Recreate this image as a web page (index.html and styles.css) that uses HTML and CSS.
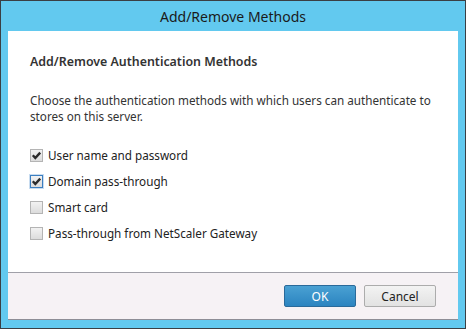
FILE: index.html
```html
<!DOCTYPE html>
<html>
<head>
<meta charset="utf-8">
<link rel="stylesheet" href="styles.css">
</head>
<body>
<div class="window">
  <div class="titlebar">Add/Remove Methods</div>
  <div class="content">
    <div class="main">
      <h1 class="heading">Add/Remove Authentication Methods</h1>
      <p class="desc">Choose the authentication methods with which users can authenticate to stores on this server.</p>
      <ul class="options">
        <li class="option"><span class="box checked"><svg viewBox="0 0 13 13" width="13" height="13"><path d="M2.8 6.3 L5.3 9 L10.2 3.6" fill="none" stroke="#2b2b2b" stroke-width="2.4"/></svg></span>User name and password</li>
        <li class="option"><span class="box checked focus"><svg viewBox="0 0 13 13" width="13" height="13"><path d="M2.8 6.3 L5.3 9 L10.2 3.6" fill="none" stroke="#2b2b2b" stroke-width="2.4"/></svg></span>Domain pass-through</li>
        <li class="option"><span class="box"></span>Smart card</li>
        <li class="option"><span class="box"></span>Pass-through from NetScaler Gateway</li>
      </ul>
    </div>
    <div class="footer">
      <button class="btn primary">OK</button>
      <button class="btn">Cancel</button>
    </div>
  </div>
</div>
</body>
</html>
```
FILE: styles.css
```css
* { box-sizing: border-box; }
html, body { margin: 0; padding: 0; }
body {
  width: 466px;
  height: 329px;
  font-family: "Noto Sans", "Open Sans", sans-serif;
  overflow: hidden;
}
.window {
  width: 466px;
  height: 329px;
  background: #62c9ef;
  border: 1px solid #3a3f44;
  padding: 0 7px 8px 7px;
  display: flex;
  flex-direction: column;
}
.titlebar {
  height: 30px;
  display: flex;
  align-items: center;
  justify-content: center;
  font-size: 14px;
  color: #1a1a1a;
  padding-top: 1px;
}
.content {
  flex: 1;
  background: #fff;
  display: flex;
  flex-direction: column;
  border-bottom: 1px solid #8e8e96;
}
.main {
  flex: 1;
  padding: 22px 22px 0 22px;
}
.heading {
  margin: 0;
  font-size: 12.4px;
  font-weight: 600;
  color: #333;
  line-height: 18px;
}
.desc {
  margin: 21px 0 0 0;
  font-size: 11.7px;
  line-height: 16px;
  color: #333;
}
.options {
  list-style: none;
  margin: 23px 0 0 0;
  padding: 0;
  display: flex;
  flex-direction: column;
  gap: 10px;
}
.option {
  display: flex;
  align-items: center;
  height: 16px;
  font-size: 11.7px;
  color: #222;
}
.box {
  width: 13px;
  height: 13px;
  border: 1px solid #b4b4b4;
  background: linear-gradient(#f2f2f2, #dcdcdc);
  margin-right: 5px;
  display: inline-flex;
  position: relative;
}
.box svg { position: absolute; left: -1px; top: -1px; }
.box.focus { border-color: #3b7ec0; box-shadow: 0 0 0 1px #c8dcf0; }
.footer {
  height: 47px;
  background: #f6f2f5;
  border-top: 1px solid #a0a0a8;
  display: flex;
  justify-content: flex-end;
  align-items: center;
  gap: 8px;
  padding: 0 22px 0 0;
}
.btn {
  width: 72px;
  height: 22px;
  font-family: inherit;
  font-size: 12px;
  color: #222;
  border: 1px solid #acacac;
  border-radius: 2px;
  background: linear-gradient(#f3f3f3, #e2e2e2);
  padding: 0;
}
.btn.primary {
  color: #fff;
  border-color: #2a6a9a;
  background: linear-gradient(#4aa1d3, #2b84c0);
}
```
